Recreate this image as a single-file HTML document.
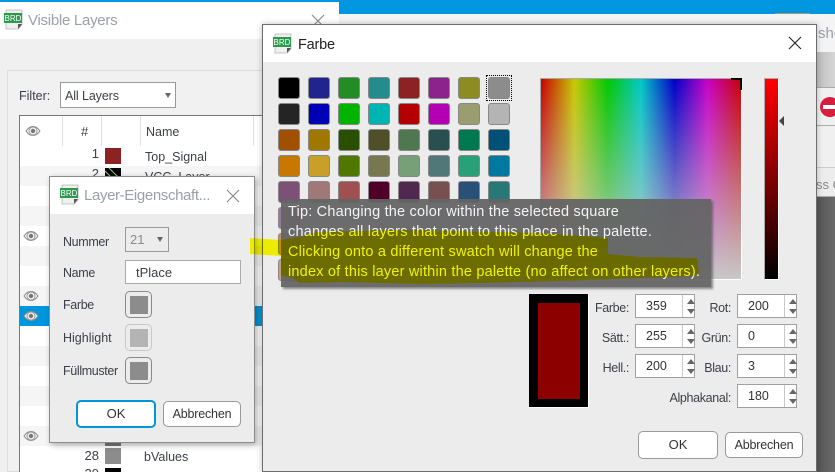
<!DOCTYPE html>
<html><head><meta charset="utf-8">
<style>
html,body{margin:0;padding:0;width:835px;height:472px;overflow:hidden;background:#fff}
body{position:relative;font-family:"Liberation Sans",sans-serif;font-size:13px;color:#3c4048}
div,span,svg{position:absolute;box-sizing:border-box}
.t{white-space:nowrap;line-height:16px}
.r{text-align:right}
.l{font-size:12.5px;letter-spacing:-.35px}
.sw{width:22px;height:22px;border:1px solid #888;border-radius:3px}
.btn{background:#fff;border:1px solid #999;border-radius:5px;text-align:center;font-size:13px;color:#333}
.ab{font-size:12.5px;letter-spacing:-.2px}
.spin{width:60px;height:24px;background:#fff;border:1px solid #a0a0a0}
.spin i{position:absolute;left:46px;top:0;width:1px;height:22px;background:#c8c8c8}
.spin b{position:absolute;left:51px;width:0;height:0;border-left:4px solid transparent;border-right:4px solid transparent}
.spin b.u{top:4px;border-bottom:5px solid #666}
.spin b.d{top:14px;border-top:5px solid #666}
.spin span{left:10px;top:3px;line-height:16px;font-size:12.5px;color:#333}
.cb{left:125px;width:27px;height:27px;border:1px solid #8a8a8a;border-radius:5px;background:#ececec}
.cb i{position:absolute;left:4px;top:4px;width:18px;height:18px;background:#8c8c8c}
.tip{left:288px;font-size:14.5px;letter-spacing:.2px;color:#f2f4f8}
</style></head>
<body>
<svg width="0" height="0" style="left:0;top:0">
<defs>
<g id="brd">
<path d="M2 1H18V16L14 20H2Z" fill="#efefef" stroke="#b5b5b5" stroke-width=".8"/>
<path d="M18 15L14 15V20Z" fill="#555"/>
<rect x="0" y="4" width="18" height="10" fill="#2c9a4c"/>
<text x="9" y="12" font-family="Liberation Sans" font-size="8" fill="#fff" text-anchor="middle">BRD</text>
</g>
<g id="eye">
<path d="M1 7C5 1 11 1 15 7C11 13 5 13 1 7Z" fill="#f5f5f5" stroke="#8a8a8a"/>
<circle cx="8" cy="7" r="4" fill="none" stroke="#9a9a9a"/>
<circle cx="8" cy="7" r="2.2" fill="#777"/>
</g>
</defs>
</svg>

<!-- backdrop -->
<div style="left:0;top:0;width:835px;height:14px;background:#0096e0"></div>
<div style="left:775px;top:13px;width:35px;height:2px;background:#a09a70"></div>
<div style="left:339px;top:14px;width:496px;height:38px;background:#f4f4f4"></div>
<div class="t" style="left:818px;top:24px;font-size:15px;line-height:20px;color:#9aa0a8">sho</div>
<div style="left:816px;top:52px;width:19px;height:35px;background:linear-gradient(90deg,#bdbdbd,#d6d6d6)"></div>
<div style="left:816px;top:87px;width:19px;height:39px;background:#f0f0f0;border-top:1px solid #aaa;border-bottom:1px solid #aaa"></div>
<div style="left:816px;top:126px;width:19px;height:41px;background:#f0f0f0"></div>
<div style="left:816px;top:167px;width:19px;height:30px;background:#ededed;border-top:1px solid #ccc;border-bottom:1px solid #aaa"></div>
<div class="t" style="left:816px;top:177px;font-size:13px;color:#888">ss C</div>
<div style="left:820px;top:97px;width:20px;height:20px;border-radius:50%;background:#d81e3c"></div>
<div style="left:823px;top:105px;width:12px;height:4px;background:#fff"></div>
<div style="left:816px;top:197px;width:19px;height:275px;background:linear-gradient(90deg,#555,#6a6a6a)"></div>

<!-- Visible Layers -->
<div style="left:0;top:2px;width:339px;height:470px;background:#fff"></div>
<div style="left:0;top:39px;width:339px;height:433px;background:#f0f0f0"></div>
<svg style="left:4px;top:9px" width="19" height="21"><use href="#brd"/></svg>
<div class="t" style="left:28px;top:11px;font-size:15px;letter-spacing:-.27px;line-height:20px;color:#9aa0a8">Visible Layers</div>
<svg style="left:310px;top:13px" width="16" height="16"><path d="M2 2L14 14M14 2L2 14" stroke="#888" stroke-width="1.1"/></svg>
<div style="left:7px;top:70px;width:332px;height:402px;background:#f1f1f1;border:1px solid #ddd"></div>
<div class="t" style="left:19px;top:88px;font-size:12.5px">Filter:</div>
<div style="left:60px;top:82px;width:116px;height:26px;background:#fff;border:1px solid #999"></div>
<div class="t" style="left:65px;top:88px;font-size:12.5px;letter-spacing:-.1px">All Layers</div>
<div style="left:165px;top:93px;width:0;height:0;border-left:3.5px solid transparent;border-right:3.5px solid transparent;border-top:5px solid #666"></div>

<div style="left:19px;top:115px;width:250px;height:357px;background:#fff;border:1px solid #777;border-width:1px 0 0 1px"></div>
<div style="left:20px;top:166px;width:245px;height:20px;background:#f5f5f5"></div>
<div style="left:20px;top:206px;width:245px;height:20px;background:#f5f5f5"></div>
<div style="left:20px;top:246px;width:245px;height:20px;background:#f5f5f5"></div>
<div style="left:20px;top:286px;width:245px;height:20px;background:#f5f5f5"></div>
<div style="left:20px;top:306px;width:245px;height:20px;background:#0096dc"></div>
<div style="left:20px;top:346px;width:245px;height:20px;background:#f5f5f5"></div>
<div style="left:20px;top:386px;width:245px;height:20px;background:#f5f5f5"></div>
<div style="left:20px;top:426px;width:245px;height:20px;background:#f5f5f5"></div>
<div style="left:62px;top:116px;width:1px;height:30px;background:#e2e2e2"></div>
<div style="left:101px;top:116px;width:1px;height:30px;background:#e2e2e2"></div>
<div style="left:140px;top:116px;width:1px;height:30px;background:#e2e2e2"></div>
<div style="left:253px;top:116px;width:1px;height:30px;background:#e2e2e2"></div>
<svg style="left:25px;top:124px" width="16" height="14"><use href="#eye"/></svg>
<svg style="left:23px;top:229px" width="16" height="14"><use href="#eye"/></svg>
<svg style="left:23px;top:289px" width="16" height="14"><use href="#eye"/></svg>
<svg style="left:23px;top:309px" width="16" height="14"><use href="#eye"/></svg>
<svg style="left:23px;top:429px" width="16" height="14"><use href="#eye"/></svg>
<div class="t" style="left:81px;top:124px;font-size:13px">#</div>
<div class="t" style="left:146px;top:124px;font-size:12.5px">Name</div>
<div class="t r" style="left:78px;width:21px;top:146px;font-size:13px">1</div>
<div style="left:105px;top:148px;width:16px;height:16px;background:#8c2222"></div>
<div class="t" style="left:145px;top:149px;font-size:12.5px">Top_Signal</div>
<div class="t r" style="left:78px;width:21px;top:166px;font-size:13px">2</div>
<svg style="left:105px;top:168px" width="16" height="16"><rect width="16" height="16" fill="#000"/><path d="M0 3L13 16M4 0L16 12" stroke="#8c8" stroke-width="1"/></svg>
<div class="t" style="left:145px;top:169px;font-size:12.5px">VCC_Layer</div>
<div style="left:105px;top:436px;width:16px;height:10px;background:#777"></div>
<div class="t r" style="left:78px;width:21px;top:448px;font-size:13px">28</div>
<div style="left:105px;top:448px;width:16px;height:16px;background:#8c8c8c"></div>
<div class="t" style="left:144px;top:449px;font-size:12.5px">bValues</div>
<div class="t r" style="left:78px;width:21px;top:466px;font-size:13px">29</div>
<svg style="left:105px;top:468px" width="16" height="4"><rect width="16" height="4" fill="#000"/></svg>

<!-- Layer-Eigenschaften -->
<div style="left:49px;top:176px;width:206px;height:267px;background:#ececec;border:1px solid #8c8c8c;box-shadow:2px 2px 6px rgba(0,0,0,.3)"></div>
<div style="left:50px;top:177px;width:204px;height:37px;background:#fff"></div>
<svg style="left:60px;top:184px" width="19" height="21"><use href="#brd"/></svg>
<div class="t" style="left:84px;top:186px;font-size:15px;letter-spacing:-.37px;line-height:20px;color:#9aa0a8">Layer-Eigenschaft...</div>
<svg style="left:225px;top:188px" width="16" height="16"><path d="M2 2L14 14M14 2L2 14" stroke="#888" stroke-width="1.1"/></svg>
<div class="t l" style="left:63px;top:234px">Nummer</div>
<div style="left:125px;top:227px;width:44px;height:25px;background:#ececec;border:1px solid #999"></div>
<div class="t" style="left:130px;top:232px;font-size:13px;color:#8a8a8a">21</div>
<div style="left:157px;top:237px;width:0;height:0;border-left:3.5px solid transparent;border-right:3.5px solid transparent;border-top:5px solid #666"></div>
<div class="t l" style="left:63px;top:265px">Name</div>
<div style="left:125px;top:260px;width:116px;height:24px;background:#fff;border:1px solid #aaa"></div>
<div class="t" style="left:136px;top:265px;font-size:13px">tPlace</div>
<div class="t l" style="left:63px;top:297px">Farbe</div>
<div class="cb" style="top:291px"><i></i></div>
<div class="t l" style="left:63px;top:330px;letter-spacing:0">Highlight</div>
<div class="cb" style="top:324px;border-color:#c8c8c8"><i style="background:#b4b4b4"></i></div>
<div class="t l" style="left:63px;top:363px">Füllmuster</div>
<div class="cb" style="top:357px"><i></i></div>
<div class="btn" style="left:76px;top:400px;width:80px;height:28px;border:2px solid #0096d8;line-height:24px">OK</div>
<div class="btn ab" style="left:163px;top:401px;width:78px;height:26px;line-height:24px">Abbrechen</div>

<!-- Farbe -->
<div style="left:262px;top:24px;width:555px;height:448px;background:#ececec;border:1px solid #6d6d6d;box-shadow:0 0 6px rgba(0,0,0,.25)"></div>
<div style="left:263px;top:25px;width:553px;height:37px;background:#fff"></div>
<svg style="left:273px;top:33px" width="19" height="21"><use href="#brd"/></svg>
<div class="t" style="left:298px;top:35px;font-size:14.5px;letter-spacing:-.2px;line-height:20px;color:#222">Farbe</div>
<svg style="left:787px;top:35px" width="16" height="16"><path d="M2 2L14 14M14 2L2 14" stroke="#222" stroke-width="1.1"/></svg>

<div class="sw" style="left:278px;top:77px;background:#000"></div>
<div class="sw" style="left:308px;top:77px;background:#23238e"></div>
<div class="sw" style="left:338px;top:77px;background:#248c24"></div>
<div class="sw" style="left:368px;top:77px;background:#248c8c"></div>
<div class="sw" style="left:398px;top:77px;background:#8c2222"></div>
<div class="sw" style="left:428px;top:77px;background:#8c228c"></div>
<div class="sw" style="left:458px;top:77px;background:#8c8c22"></div>
<div class="sw" style="left:488px;top:77px;background:#8c8c8c"></div>
<div style="left:486px;top:75px;width:26px;height:26px;border:1px dotted #000"></div>
<div class="sw" style="left:278px;top:103px;background:#242424"></div>
<div class="sw" style="left:308px;top:103px;background:#0000b4"></div>
<div class="sw" style="left:338px;top:103px;background:#00b400"></div>
<div class="sw" style="left:368px;top:103px;background:#00b4b4"></div>
<div class="sw" style="left:398px;top:103px;background:#b40000"></div>
<div class="sw" style="left:428px;top:103px;background:#b400b4"></div>
<div class="sw" style="left:458px;top:103px;background:#9a9d6e"></div>
<div class="sw" style="left:488px;top:103px;background:#b4b4b4"></div>
<div class="sw" style="left:278px;top:129px;background:#a05000"></div>
<div class="sw" style="left:308px;top:129px;background:#a07800"></div>
<div class="sw" style="left:338px;top:129px;background:#285000"></div>
<div class="sw" style="left:368px;top:129px;background:#505028"></div>
<div class="sw" style="left:398px;top:129px;background:#507850"></div>
<div class="sw" style="left:428px;top:129px;background:#285050"></div>
<div class="sw" style="left:458px;top:129px;background:#007850"></div>
<div class="sw" style="left:488px;top:129px;background:#005078"></div>
<div class="sw" style="left:278px;top:155px;background:#c87800"></div>
<div class="sw" style="left:308px;top:155px;background:#c8a028"></div>
<div class="sw" style="left:338px;top:155px;background:#507800"></div>
<div class="sw" style="left:368px;top:155px;background:#787850"></div>
<div class="sw" style="left:398px;top:155px;background:#78a078"></div>
<div class="sw" style="left:428px;top:155px;background:#507878"></div>
<div class="sw" style="left:458px;top:155px;background:#28a078"></div>
<div class="sw" style="left:488px;top:155px;background:#0078a0"></div>
<div class="sw" style="left:278px;top:181px;background:#7d5078"></div>
<div class="sw" style="left:308px;top:181px;background:#a07878"></div>
<div class="sw" style="left:338px;top:181px;background:#a05050"></div>
<div class="sw" style="left:368px;top:181px;background:#500028"></div>
<div class="sw" style="left:398px;top:181px;background:#502850"></div>
<div class="sw" style="left:428px;top:181px;background:#785050"></div>
<div class="sw" style="left:458px;top:181px;background:#285078"></div>
<div class="sw" style="left:488px;top:181px;background:#287878"></div>
<div class="sw" style="left:278px;top:207px;background:#9a78a0"></div>
<div class="sw" style="left:278px;top:233px;background:#c89050"></div>
<div class="sw" style="left:278px;top:259px;background:#c8a078"></div>

<div style="left:541px;top:79px;width:200px;height:200px;background:linear-gradient(180deg,rgba(200,200,200,0),#c8c8c8),linear-gradient(90deg,#c80000,#c8c800 16.67%,#00c800 33.33%,#00c8c8 50%,#0000c8 66.67%,#c800c8 83.33%,#c80000)"></div>
<div style="left:540px;top:78px;width:202px;height:202px;border:1px solid #a8a8a8;border-bottom-color:#fff;border-right-color:#fff"></div>
<div style="left:731px;top:78px;width:11px;height:2px;background:#000"></div>
<div style="left:740px;top:78px;width:2px;height:12px;background:#000"></div>
<div style="left:764px;top:78px;width:15px;height:202px;background:linear-gradient(180deg,#f00,#000);border:1px solid #aaa;border-bottom-color:#fff;border-right-color:#fff"></div>
<div style="left:779px;top:116px;width:0;height:0;border-top:5px solid transparent;border-bottom:5px solid transparent;border-right:5px solid #444"></div>

<!-- Tooltip -->
<div style="left:281px;top:199px;width:430px;height:88px;background:rgba(100,100,100,.94);box-shadow:2px 2px 2px rgba(70,70,70,.6)"></div>
<div class="t tip" style="top:204px">Tip: Changing the color within the selected square</div>
<div class="t tip" style="top:224px">changes all layers that point to this place in the palette.</div>
<div class="t tip" style="top:244px">Clicking onto a different swatch will change the</div>
<div class="t tip" style="top:264px">index of this layer within the palette (no affect on other layers).</div>

<!-- lower right -->
<div style="left:529px;top:294px;width:60px;height:114px;background:#000;border-right:1px solid #fff;border-bottom:1px solid #fff"></div>
<div style="left:538px;top:303px;width:42px;height:96px;background:#8c0000"></div>

<div class="t r l" style="left:560px;width:69px;top:300px">Farbe:</div>
<div class="t r l" style="left:560px;width:69px;top:330px">Sätt.:</div>
<div class="t r l" style="left:560px;width:69px;top:360px">Hell.:</div>
<div class="t r l" style="left:662px;width:69px;top:300px">Rot:</div>
<div class="t r l" style="left:662px;width:69px;top:330px">Grün:</div>
<div class="t r l" style="left:662px;width:69px;top:360px">Blau:</div>
<div class="t r l" style="left:640px;width:91px;top:390px">Alphakanal:</div>
<div class="spin" style="left:635px;top:294px"><span>359</span><i></i><b class="u"></b><b class="d"></b></div>
<div class="spin" style="left:635px;top:324px"><span>255</span><i></i><b class="u"></b><b class="d"></b></div>
<div class="spin" style="left:635px;top:354px"><span>200</span><i></i><b class="u"></b><b class="d"></b></div>
<div class="spin" style="left:737px;top:294px"><span>200</span><i></i><b class="u"></b><b class="d"></b></div>
<div class="spin" style="left:737px;top:324px"><span>0</span><i></i><b class="u"></b><b class="d"></b></div>
<div class="spin" style="left:737px;top:354px"><span>3</span><i></i><b class="u"></b><b class="d"></b></div>
<div class="spin" style="left:737px;top:384px"><span>180</span><i></i><b class="u"></b><b class="d"></b></div>
<div class="btn" style="left:638px;top:431px;width:80px;height:28px;line-height:26px">OK</div>
<div class="btn ab" style="left:725px;top:432px;width:78px;height:26px;line-height:24px">Abbrechen</div>

<!-- highlighter -->
<svg style="left:0;top:0;mix-blend-mode:multiply" width="835" height="472"><path d="M250 238L281 240L300 237L317 232L400 230L540 233L608 238L608 254L640 257L697 258L699 272L695 276L640 278L560 281L480 283L420 284L340 282L300 283L292 278L281 275L281 256L250 254Z" fill="#ffff00"/></svg>
</body></html>
